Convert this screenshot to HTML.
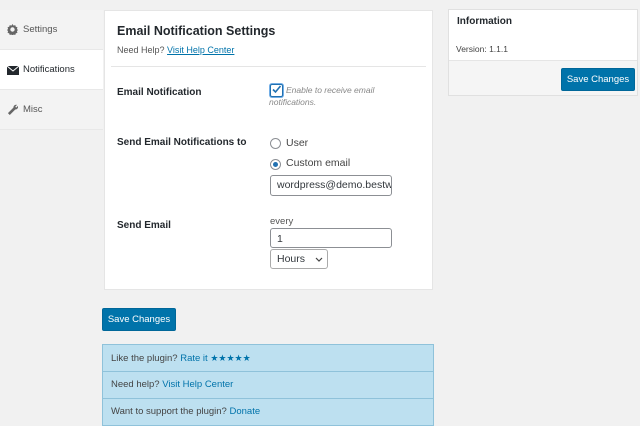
<!DOCTYPE html>
<html><head><style>
body{margin:0;width:640px;height:411px;overflow:hidden;background:#f1f1f1;font-family:"Liberation Sans",sans-serif;font-size:9.5px;color:#333;position:relative}
.a{position:absolute}
.tab{position:absolute;left:0;width:103px;height:40px;line-height:40px;padding-left:23px;box-sizing:border-box;color:#555;background:#f3f3f3;border-bottom:1px solid #e8e8e8;font-size:9.5px}
.lbl{position:absolute;left:117px;font-weight:bold;color:#23282d;font-size:10px}
.btn{position:absolute;background:#0073aa;color:#fff;border-radius:2px;text-align:center;font-size:9.5px;border:1px solid #006799}
.inp{position:absolute;background:#fff;border:1px solid #8c8f94;border-radius:3px;box-sizing:border-box;padding-left:6px;font-size:10.5px;color:#32373c}
.radio{position:absolute;width:11px;height:11px;border:1px solid #8c8f94;border-radius:50%;box-sizing:border-box;background:#fff}
.row{position:absolute;left:102px;width:332px;height:28px;line-height:26px;padding-left:8px;box-sizing:border-box;background:#bde0f0;border:1px solid #8fc2da;color:#444;font-size:9.5px}
a{color:#0073aa}
</style></head><body>
<div class="tab" style="top:10px">Settings</div>
<svg class="a" style="left:7px;top:24px" width="11" height="11" viewBox="0 0 20 20"><path fill="#666" d="M10 0l2 3 3-1 1 3 3 1-1 3 2 2-2 2 1 3-3 1-1 3-3-1-2 3-2-3-3 1-1-3-3-1 1-3-2-2 2-2-1-3 3-1 1-3 3 1zM10 6a4 4 0 100 8 4 4 0 000-8z"/></svg>
<div class="tab" style="top:50px;background:#fff;color:#23282d">Notifications</div>
<svg class="a" style="left:7px;top:66px" width="12" height="9" viewBox="0 0 12 9"><rect width="12" height="9" fill="#23282d"/><path d="M0 0l6 5 6-5" stroke="#fff" fill="none"/></svg>
<div class="tab" style="top:90px">Misc</div>
<svg class="a" style="left:7px;top:104px" width="11" height="11" viewBox="0 0 12 12"><path fill="#666" d="M1 10l6-6a3 3 0 014-3l-2 2 1 1 2-2a3 3 0 01-3 4l-6 6z"/></svg>
<div class="a" style="left:104px;top:10px;width:329px;height:280px;background:#fff;border:1px solid #e5e5e5;box-sizing:border-box"></div>
<div class="a" style="left:117px;top:24px;font-size:12.5px;font-weight:bold;color:#23282d">Email Notification Settings</div>
<div class="a" style="left:117px;top:45px;font-size:9px;color:#555">Need Help? <a href="#">Visit Help Center</a></div>
<div class="a" style="left:111px;top:66px;width:315px;height:1px;background:#e5e5e5"></div>
<div class="lbl" style="top:87px">Email Notification</div>
<div class="a" style="left:270px;top:84px;width:11px;height:11px;border:1px solid #2271b1;border-radius:2px;box-shadow:0 0 0 1px #72aee6;background:#fff"></div>
<svg class="a" style="left:271px;top:84px" width="11" height="11" viewBox="0 0 11 11"><path d="M2 5.5l2.5 2.5 5-6" stroke="#2271b1" stroke-width="1.6" fill="none"/></svg>
<div class="a" style="left:269px;top:84px;width:130px;font-style:italic;font-size:8.5px;color:#888;line-height:12px;text-indent:17px">Enable to receive email notifications.</div>
<div class="lbl" style="top:137px">Send Email Notifications to</div>
<div class="radio" style="left:270px;top:138px"></div>
<div class="a" style="left:286px;top:137px;font-size:10.5px;color:#444">User</div>
<div class="radio" style="left:270px;top:159px"><div style="width:5px;height:5px;background:#2271b1;border-radius:50%;margin:2px"></div></div>
<div class="a" style="left:286px;top:157px;font-size:10.5px;color:#444">Custom email</div>
<div class="inp" style="left:270px;top:175px;width:122px;height:21px;line-height:19px;overflow:hidden;white-space:nowrap">wordpress@demo.bestwe</div>
<div class="lbl" style="top:220px">Send Email</div>
<div class="a" style="left:270px;top:216px;font-size:9.5px;color:#555">every</div>
<div class="inp" style="left:270px;top:228px;width:122px;height:20px;line-height:20px">1</div>
<div class="inp" style="left:270px;top:249px;width:58px;height:20px;line-height:19px;border-color:#aaa">Hours<svg style="position:absolute;left:44px;top:7px" width="8" height="6" viewBox="0 0 8 6"><path d="M1 1l3 3 3-3" stroke="#444" stroke-width="1.2" fill="none"/></svg></div>
<div class="btn" style="left:102px;top:308px;width:72px;height:21px;line-height:21px">Save Changes</div>
<div class="row" style="top:344px">Like the plugin? <a style="text-decoration:none" href="#">Rate it</a> <span style="color:#0073aa;font-size:9px">★★★★★</span></div>
<div class="row" style="top:371px">Need help? <a style="text-decoration:none" href="#">Visit Help Center</a></div>
<div class="row" style="top:398px">Want to support the plugin? <a style="text-decoration:none" href="#">Donate</a></div>
<div class="a" style="left:448px;top:9px;width:190px;height:87px;background:#f5f5f5;border:1px solid #e0e0e0;box-sizing:border-box"><div style="background:#fff;height:50px;border-bottom:1px solid #e5e5e5"></div></div>
<div class="a" style="left:457px;top:16px;font-weight:bold;font-size:10px;color:#23282d">Information</div>
<div class="a" style="left:456px;top:44px;font-size:8.5px;color:#444">Version: 1.1.1</div>
<div class="btn" style="left:561px;top:68px;width:72px;height:21px;line-height:21px">Save Changes</div>
</body></html>
